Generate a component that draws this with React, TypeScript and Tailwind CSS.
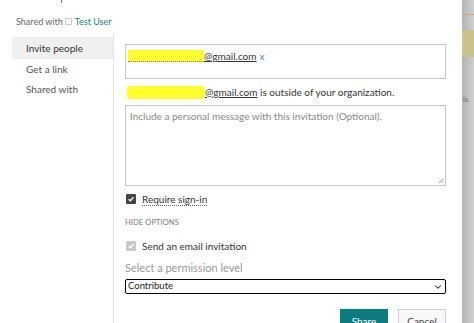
import { ChevronDown } from "lucide-react"

const font = { fontFamily: 'Lato, "Open Sans", sans-serif' }

function Check({ disabled }: { disabled?: boolean }) {
  return (
    <span
      className={`flex h-[10px] w-[10px] shrink-0 items-center justify-center rounded-[1px] ${
        disabled ? "bg-[#c8c8c8]" : "bg-[#444]"
      }`}
    >
      <svg viewBox="0 0 10 10" className="h-[8px] w-[8px]">
        <path d="M2 5.2 L4.2 7.2 L8 2.8" fill="none" stroke="white" strokeWidth="1.6" />
      </svg>
    </span>
  )
}

export default function App() {
  return (
    <div
      className="flex h-[323px] w-[474px] overflow-hidden bg-white text-[10px] text-[#333]"
      style={font}
    >
      <div className="flex w-[462px] shrink-0 flex-col">
        {/* cut-off title */}
        <div className="h-[8px] shrink-0 pl-[61px]">
          <span className="block h-[3px] w-[1px] bg-[#777]" />
        </div>

        <div className="flex h-[24px] shrink-0 items-center pl-[16px] pt-[3px] text-[9px] text-[#666]">
          Shared with
          <span className="ml-[2px] mr-[3px] inline-block h-[7px] w-[7px] border border-[#ccc]" />
          <span className="text-[#1a7f86]">Test User</span>
        </div>

        <div className="flex shrink-0">
          {/* left nav */}
          <div className="w-[113px] shrink-0 pl-[12px] pt-[5px]">
            <div className="flex h-[22px] items-center bg-[#f0f0f0] pl-[14px] text-[#333]">
              Invite people
            </div>
            <div className="flex h-[20px] items-center pl-[14px] text-[#555]">Get a link</div>
            <div className="flex h-[21px] items-center pl-[14px] text-[#555]">Shared with</div>
          </div>

          {/* divider + content */}
          <div className="flex flex-1 flex-col border-l border-[#e4e4e4] pl-[11px] pr-[16px] pt-[12px]">
            <div className="flex h-[35px] shrink-0 items-start border border-[#c6c6c6] px-[2px] pt-[5px] leading-[12px]">
              <span className="inline-block h-[12px] w-[76px] border-b border-dotted border-[#8a8a40] bg-[#ffff2e]" />
              <span className="underline">@gmail.com</span>
              <span className="ml-[3px] text-[#3b82c4]">x</span>
            </div>

            <div className="mt-[5px] flex h-[16px] shrink-0 items-center pl-[2px]">
              <span className="inline-block h-[13px] w-[78px] rounded-[3px] bg-[#ffff2e]" />
              <span className="underline">@gmail.com</span>
              <span>&nbsp;is outside of your organization.</span>
            </div>

            <div className="relative mt-[5px] h-[81px] shrink-0 border border-[#c6c6c6] px-[4px] pt-[3px] text-[#888]">
              Include a personal message with this invitation (Optional).
              <svg viewBox="0 0 8 8" className="absolute bottom-[1px] right-[1px] h-[7px] w-[7px]">
                <path d="M7 2 L2 7 M7 5 L5 7" stroke="#777" strokeWidth="0.9" />
              </svg>
            </div>

            <div className="mt-[7px] flex h-[12px] shrink-0 items-center gap-[6px] pl-[1px]">
              <Check />
              <span className="border-b border-dotted border-[#666] leading-[12px] text-[#333]">
                Require sign-in
              </span>
            </div>

            <div className="mt-[12px] h-[12px] shrink-0 text-[7.5px] leading-[12px] tracking-[0.1px] text-[#777]">
              HIDE OPTIONS
            </div>

            <div className="mt-[11px] flex h-[12px] shrink-0 items-center gap-[6px] pl-[1px]">
              <Check disabled />
              <span className="text-[#333]">Send an email invitation</span>
            </div>

            <div className="mt-[9px] h-[14px] shrink-0 text-[11px] leading-[14px] text-[#999]">
              Select a permission level
            </div>

            <div className="mt-[4px] flex h-[15px] shrink-0 items-center justify-between rounded-[2px] border border-black pl-[2px] pr-[2px] text-[9.5px] text-[#222]">
              Contribute
              <ChevronDown className="h-[10px] w-[10px]" strokeWidth={2.5} />
            </div>

            <div className="mt-[15px] flex shrink-0 justify-end gap-[10px]">
              <div className="flex h-[22px] w-[48px] items-start justify-center bg-[#0b7c80] pt-[5px] text-white">
                Share
              </div>
              <div className="flex h-[22px] w-[48px] items-start justify-center border border-[#d0d0d0] bg-[#f8f8f8] pt-[4px] text-[#444]">
                Cancel
              </div>
            </div>
          </div>
        </div>
      </div>

      {/* dimmed page behind the dialog */}
      <div className="flex w-[12px] flex-col bg-gradient-to-r from-[#b4b4b4] to-[#cfcfcf]">
        <div className="mt-[14px] h-[1px] bg-[#d4a27a]" />
        <div className="mt-[15px] h-[27px] bg-[#c9c28e]" />
        <div className="mt-[36px] pl-[1px] text-[8px] text-[#666]">is</div>
      </div>
    </div>
  )
}
